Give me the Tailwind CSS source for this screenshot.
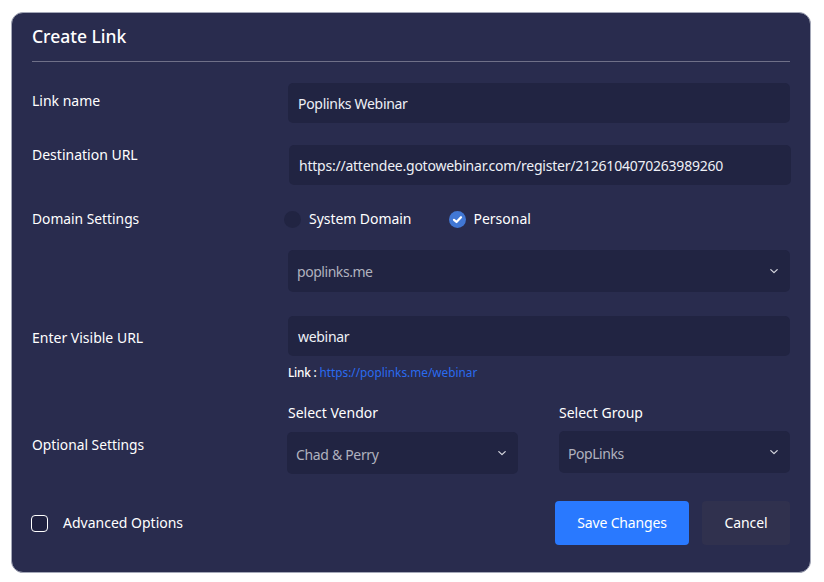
<!DOCTYPE html>
<html lang="en">
<head>
    <meta charset="UTF-8">
    <title>Create Link</title>
    <script src="https://cdn.jsdelivr.net/npm/@tailwindcss/browser@4"></script>
</head>
<body class="bg-white font-['Noto_Sans','Open_Sans',sans-serif] text-white">
    <div class="w-[824px] h-[582px] pt-[12px] pl-[11px]">
        <div class="w-[800px] h-[561px] rounded-[12px] border border-[#a4a8b8] bg-[#292c4e] pl-[20px] pr-[20px]">

            <!-- Title -->
            <div class="h-[49px] border-b border-[#6f7088] pt-[9px]">
                <h2 class="text-[17.5px] leading-[28px] font-medium">Create Link</h2>
            </div>

            <!-- Link name -->
            <div class="flex mt-[21px] h-[40px]">
                <label class="w-[256px] shrink-0 text-[14px] leading-[20px] pt-[8px]">Link name</label>
                <div class="w-[502px] shrink-0 h-[40px] rounded-[5px] bg-[#212442] px-[10px] text-[14px] tracking-[-0.3px] leading-[42px] text-[#eef0f6]">Poplinks Webinar</div>
            </div>

            <!-- Destination URL -->
            <div class="flex mt-[22px] h-[40px]">
                <label class="w-[257px] shrink-0 text-[14px] leading-[20px]">Destination URL</label>
                <div class="w-[502px] shrink-0 h-[40px] rounded-[5px] bg-[#212442] px-[10px] text-[14px] tracking-[-0.23px] leading-[42px] text-[#eef0f6]">https://attendee.gotowebinar.com/register/2126104070263989260</div>
            </div>

            <!-- Domain settings -->
            <div class="flex mt-[24px] h-[20px] items-center">
                <label class="w-[252px] shrink-0 text-[13.8px] leading-[20px]">Domain Settings</label>
                <div class="flex items-center">
                    <span class="w-[17px] h-[17px] rounded-full bg-[#212442]"></span>
                    <span class="ml-[8px] text-[14px] tracking-[-0.05px] leading-[20px]">System Domain</span>
                    <span class="ml-[38px] w-[17px] h-[17px] rounded-full bg-[#4177d4] flex items-center justify-center">
                        <svg width="11" height="11" viewBox="0 0 11 11" fill="none" stroke="white" stroke-width="2.2" stroke-linecap="round" stroke-linejoin="round"><path d="M2 5.8 4.5 8 9 3.2"/></svg>
                    </span>
                    <span class="ml-[7px] text-[14px] leading-[20px]">Personal</span>
                </div>
            </div>

            <!-- Domain select -->
            <div class="mt-[21px] ml-[256px] w-[502px] h-[42px] rounded-[5px] bg-[#212442] pl-[9px] pr-[11px] flex items-center justify-between text-[14px] tracking-[-0.45px] text-[#b0b2be]">
                <span class="leading-[20px] pt-[1px]">poplinks.me</span>
                <svg width="10" height="10" viewBox="0 0 10 10" fill="none" stroke="#d5d6de" stroke-width="1.3" stroke-linecap="round" stroke-linejoin="round"><path d="M1.8 3.6 5 6.6l3.2-3"/></svg>
            </div>

            <!-- Visible URL -->
            <div class="flex mt-[24px] h-[40px]">
                <label class="w-[256px] shrink-0 text-[14px] leading-[20px] pt-[12px]">Enter Visible URL</label>
                <div class="w-[502px] shrink-0 h-[40px] rounded-[5px] bg-[#212442] px-[10px] text-[14px] tracking-[-0.3px] leading-[42px] text-[#eef0f6]">webinar</div>
            </div>
            <p class="mt-[8px] ml-[256px] text-[11.8px] leading-[16px]"><span class="font-medium tracking-[-0.2px]">Link : </span><a class="text-[#2a6bf0]">https://poplinks.me/webinar</a></p>

            <!-- Optional settings -->
            <div class="flex mt-[24px] h-[64px]">
                <label class="w-[255px] shrink-0 text-[13.8px] leading-[20px] pt-[31px]">Optional Settings</label>
                <div class="w-[231px] shrink-0">
                    <p class="ml-[1px] text-[14px] leading-[20px] h-[20px] -mt-[1px]">Select Vendor</p>
                    <div class="mt-[9px] h-[42px] rounded-[5px] bg-[#212442] pl-[9px] pr-[11px] flex items-center justify-between text-[14px] tracking-[-0.33px] text-[#b0b2be]">
                        <span class="leading-[20px] pt-[3px]">Chad &amp; Perry</span>
                        <svg width="10" height="10" viewBox="0 0 10 10" fill="none" stroke="#d5d6de" stroke-width="1.3" stroke-linecap="round" stroke-linejoin="round"><path d="M1.8 3.6 5 6.6l3.2-3"/></svg>
                    </div>
                </div>
                <div class="ml-[41px] w-[231px] shrink-0">
                    <p class="text-[14px] leading-[20px] h-[20px] -mt-[1px]">Select Group</p>
                    <div class="mt-[8px] h-[42px] rounded-[5px] bg-[#212442] pl-[9px] pr-[11px] flex items-center justify-between text-[14px] tracking-[-0.45px] text-[#b0b2be]">
                        <span class="leading-[20px] pt-[3px]">PopLinks</span>
                        <svg width="10" height="10" viewBox="0 0 10 10" fill="none" stroke="#d5d6de" stroke-width="1.3" stroke-linecap="round" stroke-linejoin="round"><path d="M1.8 3.6 5 6.6l3.2-3"/></svg>
                    </div>
                </div>
            </div>

            <!-- Footer -->
            <div class="flex items-center mt-[33px] h-[44px]">
                <span class="-ml-[1px] w-[17px] h-[17px] rounded-[4px] border-[1.5px] border-white bg-[#1f2140]"></span>
                <span class="ml-[15px] text-[14px] leading-[20px]">Advanced Options</span>
                <button class="ml-auto w-[134px] h-[44px] rounded-[4px] bg-[#2979ff] pb-[1px] text-[14px] tracking-[-0.15px]">Save Changes</button>
                <button class="ml-[13px] w-[88px] h-[44px] rounded-[4px] bg-[#30314e] pb-[1px] text-[14px] tracking-[-0.1px]">Cancel</button>
            </div>
        </div>
    </div>
</body>
</html>
